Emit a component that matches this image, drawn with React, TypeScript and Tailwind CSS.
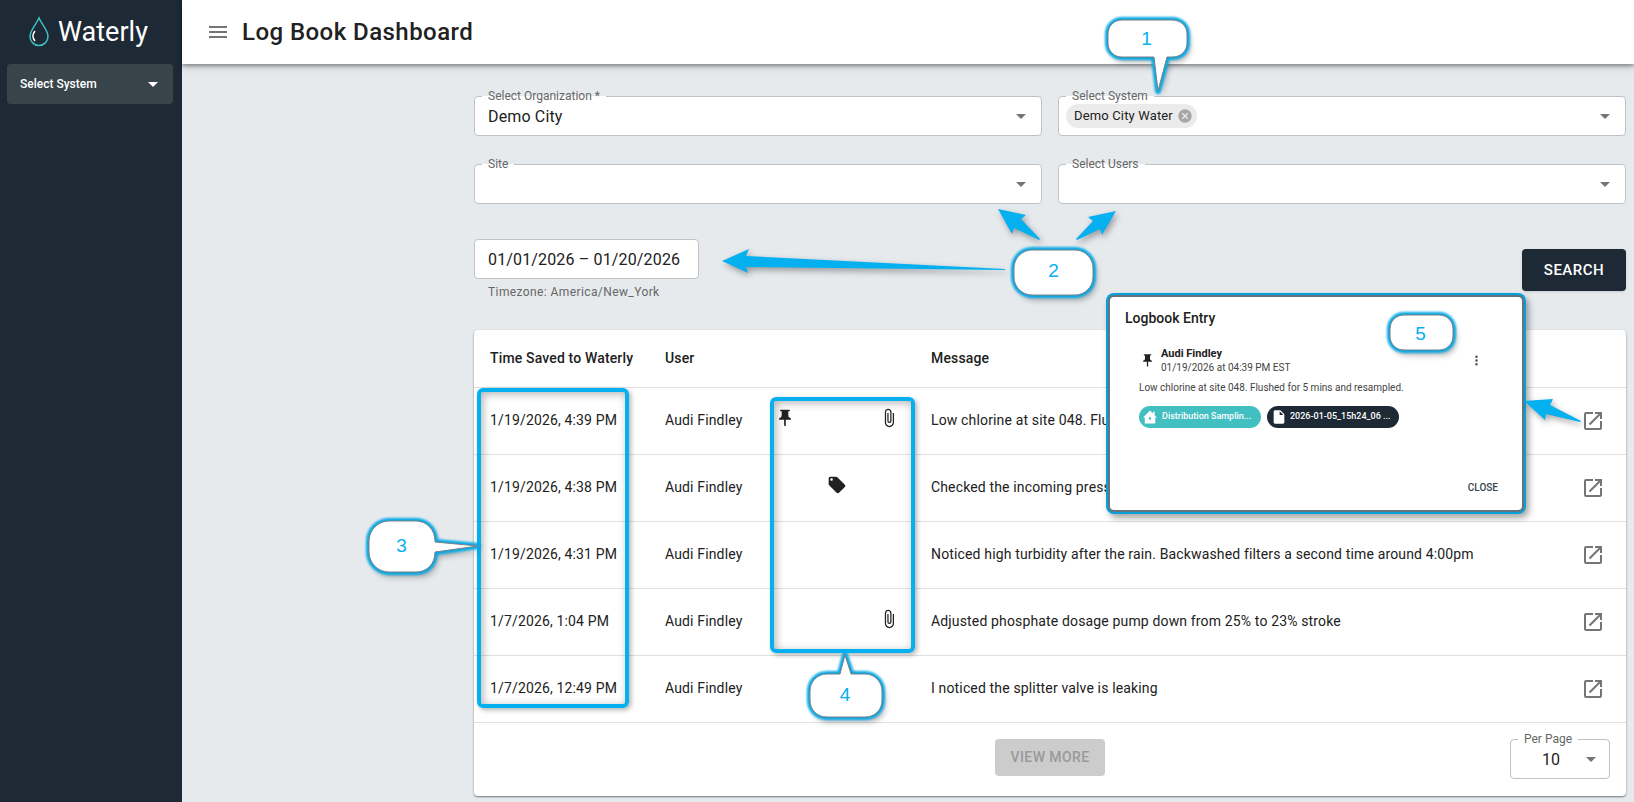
import type { ReactNode } from 'react'
import {
  MdArrowDropDown,
  MdAttachFile,
  MdCancel,
  MdInsertDriveFile,
  MdLaunch,
  MdLocalOffer,
  MdMenu,
  MdMoreVert,
  MdPushPin,
} from 'react-icons/md'

type Entry = {
  time: string
  message: string
  pinned?: boolean
  tagged?: boolean
  attached?: boolean
}

const entries: Entry[] = [
  { time: '1/19/2026, 4:39 PM', message: 'Low chlorine at site 048. Flushed for 5 mins and resampled.', pinned: true, attached: true },
  { time: '1/19/2026, 4:38 PM', message: 'Checked the incoming pressure', tagged: true },
  { time: '1/19/2026, 4:31 PM', message: 'Noticed high turbidity after the rain. Backwashed filters a second time around 4:00pm' },
  { time: '1/7/2026, 1:04 PM', message: 'Adjusted phosphate dosage pump down from 25% to 23% stroke', attached: true },
  { time: '1/7/2026, 12:49 PM', message: 'I noticed the splitter valve is leaking' },
]

function FieldLabel({ htmlFor, children }: { htmlFor: string; children: ReactNode }) {
  return (
    <label
      htmlFor={htmlFor}
      className="absolute -top-[9px] left-[7px] bg-linear-to-b from-transparent from-50% to-white to-50% px-[6px] text-xs leading-4 text-[#666]"
    >
      {children}
    </label>
  )
}

function SelectField({ id, label, value = '', chip }: { id: string; label: string; value?: string; chip?: string }) {
  return (
    <div className="relative h-10 rounded border border-[#c0c2c3] bg-white">
      <FieldLabel htmlFor={id}>{label}</FieldLabel>
      <select
        id={id}
        defaultValue={value}
        className="h-full w-full appearance-none bg-transparent px-[13px] pt-0.5 text-base tracking-[0.15px] text-[#212121] outline-none"
      >
        <option value={value}>{value}</option>
      </select>
      {chip && (
        <span className="absolute top-[7px] left-[7px] flex h-6 items-center gap-1 rounded-full bg-[#ebebeb] pr-1 pl-2 text-[13px] tracking-[0.15px] text-[#212121]">
          {chip}
          <button type="button" aria-label="Remove" className="text-[#a6a6a6]">
            <MdCancel size={16} />
          </button>
        </span>
      )}
      <MdArrowDropDown size={24} className="pointer-events-none absolute top-[7px] right-2 text-[#757575]" />
    </div>
  )
}

function Callout({ label, className, path, box }: { label: string; className: string; path: string; box: string }) {
  return (
    <div className={`absolute ${className}`}>
      <svg className="absolute inset-0 h-full w-full overflow-visible" aria-hidden="true">
        <path d={path} fill="#000" opacity="0.3" transform="translate(3 5)" className="blur-[3px]" />
        <path d={path} fill="#04a9e6" stroke="#04a9e6" strokeWidth="6" strokeLinejoin="round" className="blur-[1px]" />
        <path d={path} fill="#fff" stroke="#7d7f82" strokeWidth="1" strokeLinejoin="round" />
      </svg>
      <span className={`relative flex items-center justify-center font-['Liberation_Sans'] text-[19px] text-[#04b0ef] ${box}`}>{label}</span>
    </div>
  )
}

function LogbookEntry() {
  return (
    <section
      aria-label="Logbook Entry"
      className="absolute top-[295px] left-[1108px] flex h-[217px] w-[416px] flex-col rounded-md border-2 border-[#66757d] bg-white text-[#212121] shadow-[0_0_0_2px_#04a0da,3px_4px_6px_2px_rgba(0,0,0,0.35)]"
    >
      <h2 className="px-[15px] pt-[11px] text-sm leading-5 font-medium">Logbook Entry</h2>
      <div className="flex items-center gap-[6px] px-[30px] pt-[18px]">
        <MdPushPin size={15} />
        <div className="flex-1">
          <p className="text-[11px] leading-4 font-bold">Audi Findley</p>
          <p className="text-[10px] leading-3 text-[#444]">01/19/2026 at 04:39 PM EST</p>
        </div>
        <button type="button" aria-label="More" className="mr-2 text-[#555]">
          <MdMoreVert size={15} />
        </button>
      </div>
      <p className="px-[29px] pt-[6px] text-[10px] leading-4 text-[#444]">Low chlorine at site 048. Flushed for 5 mins and resampled.</p>
      <div className="flex gap-[6px] px-[29px] pt-[10px] text-[9px] font-medium text-white">
        <span className="flex h-[22px] w-[122px] items-center gap-[5px] rounded-full bg-[#42bfc1] pl-1 whitespace-nowrap">
          <svg width="14" height="14" viewBox="0 0 24 24" fill="currentColor" aria-hidden="true">
            <path fillRule="evenodd" d="M12 1 0 13h3v10h18V13h3l-4-4V3h-3v3L12 1zm0 10s2 2.200 2 3.800a2 2 0 0 1-4 0c0-1.600 2-3.800 2-3.800z" />
          </svg>
          Distribution Samplin...
        </span>
        <span className="flex h-[22px] w-[132px] items-center gap-[3px] rounded-full bg-[#1d2934] pl-1 whitespace-nowrap">
          <MdInsertDriveFile size={16} />
          2026-01-05_15h24_06 ...
        </span>
      </div>
      <button type="button" className="mt-auto mr-6 mb-3 self-end text-[10px] leading-5 font-medium text-[#37454b]">CLOSE</button>
    </section>
  )
}

function Annotations() {
  return (
    <>
      <div className="pointer-events-none absolute top-[388px] left-[477px] h-80 w-[152px] rounded-md border-4 border-[#04b0ef] shadow-[2px_2px_5px_rgba(0,0,0,0.3),inset_2px_2px_8px_rgba(0,0,0,0.3)]" />
      <div className="pointer-events-none absolute top-[397px] left-[770px] h-64 w-[145px] rounded-md border-4 border-[#04b0ef] shadow-[2px_2px_5px_rgba(0,0,0,0.3),inset_2px_2px_8px_rgba(0,0,0,0.3)]" />
      <svg
        className="pointer-events-none absolute top-0 left-0 h-full w-full drop-shadow-[2px_3px_3px_rgba(0,0,0,0.35)]"
        fill="#04b0ef"
        aria-hidden="true"
      >
        <path d="M722 261 749 249 746 256 1005 269V270L746 267 748 273Z" />
        <path d="M998 209 1026 215 1021 219 1040 239 1039 240 1014 228 1012 234Z" />
        <path d="M1116 211 1088 217 1093 221 1076 239 1077 240 1100 229 1102 235Z" />
        <path d="M1524 401 1553 399 1550 405 1581 421 1580 422 1546 414 1545 420Z" />
      </svg>
      <Callout
        label="1"
        className="top-5 left-[1108px] h-[37px] w-[79px]"
        box="h-[38px] w-[77px]"
        path="M14 0H64C73 0 79 6 79 14V23C79 31 73 37 64 37H59L50 71 46 37H14C6 37 0 31 0 23V14C0 6 6 0 14 0Z"
      />
      <Callout
        label="2"
        className="top-[250px] left-[1014px] h-[45px] w-[79px]"
        box="h-[42px] w-[79px]"
        path="M18 0H61C71 0 79 8 79 18V27C79 37 71 45 61 45H18C8 45 0 37 0 27V18C0 8 8 0 18 0Z"
      />
      <Callout
        label="3"
        className="top-[521px] left-[369px] h-[51px] w-[67px]"
        box="h-[50px] w-[65px]"
        path="M20 0H47C58 0 66 9 66 20V21L109 25 66 31C66 43 58 51 47 51H20C9 51 0 42 0 31V20C0 9 9 0 20 0Z"
      />
      <Callout
        label="4"
        className="top-[674px] left-[810px] h-[43px] w-[72px]"
        box="h-[42px] w-[70px]"
        path="M17 0H30L35-19 41 0H55C65 0 72 8 72 17V26C72 36 65 43 55 43H17C7 43 0 36 0 26V17C0 8 7 0 17 0Z"
      />
      <Callout
        label="5"
        className="top-[315px] left-[1390px] h-[35px] w-[63px]"
        box="h-[38px] w-[61px]"
        path="M14 0H49C57 0 63 6 63 14V21C63 29 57 35 49 35H14C6 35 0 29 0 21V14C0 6 6 0 14 0Z"
      />
    </>
  )
}

export default function App() {
  return (
    <div className="relative flex min-h-screen overflow-hidden bg-[#e6eaed] font-[Roboto,sans-serif] text-[#212121]">
      <aside className="w-[182px] shrink-0 bg-[#1d2a35] pr-[9px] pl-[7px] text-white">
        <a href="#home" className="flex h-16 items-center justify-center gap-2 pr-1">
          <svg width="22" height="32" viewBox="0 0 22 32" fill="none" aria-hidden="true">
            <path d="M11 2C8 9 2 14 2 20.500a9 9 0 0 0 18 0C20 14 14 9 11 2Z" stroke="#3fc1c3" strokeWidth="1.500" />
            <path d="M7 15C4.500 18 4.500 22 7 25" stroke="#fff" strokeWidth="1.500" />
          </svg>
          <span className="text-[27px] leading-8">Waterly</span>
        </a>
        <button type="button" className="flex h-10 w-full items-center justify-between rounded bg-[#37454b] pr-2 pl-[13px] text-xs font-medium">
          Select System
          <MdArrowDropDown size={24} />
        </button>
      </aside>

      <div className="flex min-w-0 flex-1 flex-col">
        <header className="flex h-16 items-center gap-3 bg-white px-6 shadow-[0_2px_4px_rgba(0,0,0,0.35),0_3px_8px_rgba(0,0,0,0.15)]">
          <button type="button" aria-label="Menu" className="text-[#757575]">
            <MdMenu size={24} />
          </button>
          <h1 className="text-2xl font-medium tracking-[0.45px]">Log Book Dashboard</h1>
        </header>

        <main className="flex flex-1 flex-col pt-8 pr-2 pb-[7px] pl-[292px]">
          <form className="flex flex-col" onSubmit={(event) => event.preventDefault()}>
            <div className="grid grid-cols-2 gap-x-4 gap-y-7">
              <SelectField id="organization" label="Select Organization *" value="Demo City" />
              <SelectField id="system" label="Select System" chip="Demo City Water" />
              <SelectField id="site" label="Site" />
              <SelectField id="users" label="Select Users" />
            </div>
            <div className="flex items-center justify-between pt-[35px]">
              <div>
                <input
                  aria-label="Date range"
                  defaultValue="01/01/2026 – 01/20/2026"
                  className="block h-10 w-[225px] rounded border border-[#c0c2c3] bg-white px-[13px] text-base tracking-[0.15px] outline-none"
                />
                <p className="px-[14px] pt-1 text-xs leading-[18px] tracking-[0.4px] text-[#666]">Timezone: America/New_York</p>
              </div>
              <button type="submit" className="h-[42px] rounded bg-[#1d2a35] px-[22px] text-[15px] font-medium tracking-[0.46px] text-white shadow-sm">
                SEARCH
              </button>
            </div>
          </form>

          <section className="mt-[29px] rounded bg-white shadow-[0_1px_2px_rgba(0,0,0,0.5)]">
            <table className="w-full table-fixed border-collapse text-sm tracking-[0.15px]">
              <thead>
                <tr className="h-[57px] border-b border-[#e0e0e0] text-left">
                  <th className="w-[175px] pl-4 font-medium">Time Saved to Waterly</th>
                  <th className="w-[106px] pl-4 font-medium">User</th>
                  <th className="w-[160px]" aria-label="Flags" />
                  <th className="pl-4 font-medium">Message</th>
                  <th className="w-[66px]" aria-label="Open" />
                </tr>
              </thead>
              <tbody>
                {entries.map((entry) => (
                  <tr key={entry.time} className="h-[67px] border-b border-[#e0e0e0]">
                    <td className="pb-0.5 pl-4">{entry.time}</td>
                    <td className="pb-0.5 pl-4">Audi Findley</td>
                    <td className="pb-1.5 pl-1">
                      <div className="grid grid-cols-3 justify-items-center">
                        <span>{entry.pinned && <MdPushPin size={20} />}</span>
                        <span>{entry.tagged && <MdLocalOffer size={20} />}</span>
                        <span>{entry.attached && <MdAttachFile size={20} />}</span>
                      </div>
                    </td>
                    <td className="truncate pb-0.5 pl-4">{entry.message}</td>
                    <td>
                      <button type="button" aria-label="Open entry" className="flex w-full justify-center text-[#757575]">
                        <MdLaunch size={24} />
                      </button>
                    </td>
                  </tr>
                ))}
              </tbody>
            </table>
            <div className="grid h-[73px] grid-cols-[1fr_auto_1fr] items-center px-4">
              <span />
              <button type="button" disabled className="mb-1 h-[37px] rounded bg-[#cccccc] px-4 text-sm font-medium tracking-[0.4px] text-[#999]">
                VIEW MORE
              </button>
              <div className="relative h-10 w-[100px] justify-self-end rounded border border-[#c0c2c3]">
                <FieldLabel htmlFor="per-page">Per Page</FieldLabel>
                <select id="per-page" className="h-full w-full appearance-none bg-transparent pt-0.5 pl-[31px] text-base outline-none">
                  <option>10</option>
                </select>
                <MdArrowDropDown size={24} className="pointer-events-none absolute top-[7px] right-[6px] text-[#757575]" />
              </div>
            </div>
          </section>
        </main>
      </div>

      <LogbookEntry />
      <Annotations />
    </div>
  )
}
